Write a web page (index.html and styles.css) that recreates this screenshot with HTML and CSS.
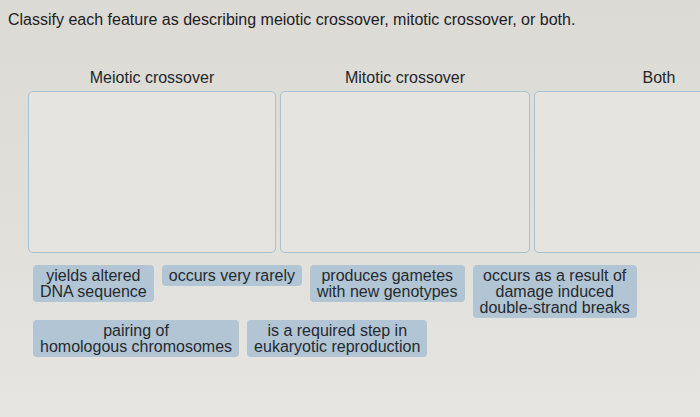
FILE: index.html
```html
<!DOCTYPE html>
<html lang="en">
<head>
    <meta charset="UTF-8">
    <meta name="viewport" content="width=device-width, initial-scale=1.0">
    <title>Classify Crossover Features</title>
    <link rel="stylesheet" href="styles.css">
</head>
<body>
    <div class="page">
        <p class="prompt">Classify each feature as describing meiotic crossover, mitotic crossover, or both.</p>

        <div class="bins">
            <div class="bin">
                <div class="bin-label">Meiotic crossover</div>
                <div class="bin-drop"></div>
            </div>
            <div class="bin">
                <div class="bin-label">Mitotic crossover</div>
                <div class="bin-drop"></div>
            </div>
            <div class="bin">
                <div class="bin-label">Both</div>
                <div class="bin-drop"></div>
            </div>
        </div>

        <div class="pool">
            <div class="chip">yields altered<br>DNA sequence</div>
            <div class="chip">occurs very rarely</div>
            <div class="chip">produces gametes<br>with new genotypes</div>
            <div class="chip">occurs as a result of<br>damage induced<br>double-strand breaks</div>
            <div class="chip">pairing of<br>homologous chromosomes</div>
            <div class="chip">is a required step in<br>eukaryotic reproduction</div>
        </div>
    </div>
</body>
</html>
```

FILE: styles.css
```css
html, body {
    margin: 0;
    padding: 0;
    height: 100%;
    overflow: hidden;
}

body {
    font-family: "Liberation Sans", Arial, sans-serif;
    color: #23272b;
    background: linear-gradient(180deg, #dbdad4 0%, #e1e0db 60%, #e6e5e1 100%);
}

.page {
    padding: 11px 0 0 8px;
}

.prompt {
    margin: 0;
    font-size: 16px;
    line-height: 18px;
    color: #1d2023;
}

/* drop targets */
.bins {
    display: grid;
    grid-template-columns: 248px 250px 250px;
    column-gap: 4px;
    margin: 40px 0 0 20px;
    width: 760px;
}

.bin-label {
    text-align: center;
    font-size: 16px;
    line-height: 18px;
    margin-bottom: 4px;
}

.bin-drop {
    height: 160px;
    border: 1px solid #a9c0d0;
    border-radius: 5px;
    background-color: #e5e4e0;
}

/* draggable answer chips */
.pool {
    display: flex;
    flex-wrap: wrap;
    align-items: flex-start;
    column-gap: 8px;
    row-gap: 2px;
    width: 625px;
    margin: 12px 0 0 25px;
}

.chip {
    background-color: #b2c5d5;
    border-radius: 4px;
    padding: 3px 7px 2px;
    font-size: 16px;
    line-height: 16px;
    text-align: center;
    color: #252a2f;
}
```
